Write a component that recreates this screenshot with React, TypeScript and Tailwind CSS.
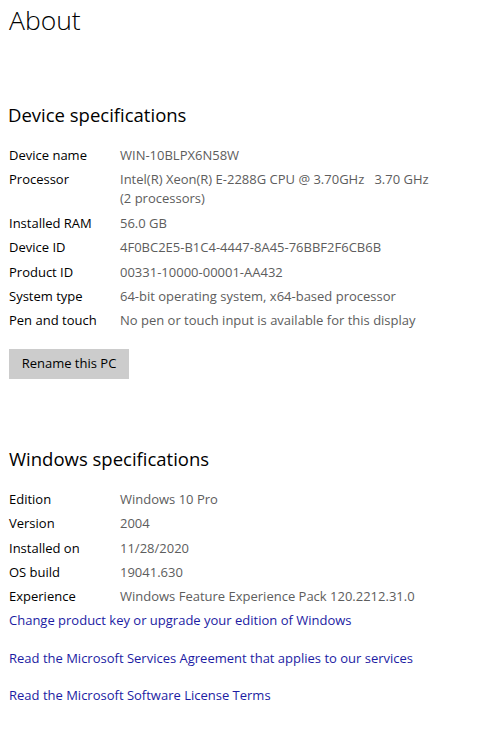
const font = { fontFamily: '"Open Sans", "Noto Sans", sans-serif' };

type Spec = { label: string; value: string[] };

const device: Spec[] = [
  { label: "Device name", value: ["WIN-10BLPX6N58W"] },
  { label: "Processor", value: ["Intel(R) Xeon(R) E-2288G CPU @ 3.70GHz   3.70 GHz", "(2 processors)"] },
  { label: "Installed RAM", value: ["56.0 GB"] },
  { label: "Device ID", value: ["4F0BC2E5-B1C4-4447-8A45-76BBF2F6CB6B"] },
  { label: "Product ID", value: ["00331-10000-00001-AA432"] },
  { label: "System type", value: ["64-bit operating system, x64-based processor"] },
  { label: "Pen and touch", value: ["No pen or touch input is available for this display"] },
];

const windows: Spec[] = [
  { label: "Edition", value: ["Windows 10 Pro"] },
  { label: "Version", value: ["2004"] },
  { label: "Installed on", value: ["11/28/2020"] },
  { label: "OS build", value: ["19041.630"] },
  { label: "Experience", value: ["Windows Feature Experience Pack 120.2212.31.0"] },
];

function SpecList({ items }: { items: Spec[] }) {
  return (
    <div className="flex flex-col gap-[5.4px]">
      {items.map((item) => (
        <div key={item.label} className="flex text-[13px] leading-[19px]">
          <div className="w-[111px] shrink-0 text-black">{item.label}</div>
          <div className="text-[#5d5d5d] whitespace-pre">
            {item.value.map((line) => (
              <div key={line}>{line}</div>
            ))}
          </div>
        </div>
      ))}
    </div>
  );
}

export default function App() {
  return (
    <div className="min-h-screen bg-white pl-[9px]" style={font}>
      <h1 className="text-[26.5px] leading-[40px] font-light text-black">About</h1>

      <h2 className="mt-[61px] -ml-px text-[18.5px] leading-[28px] text-black">Device specifications</h2>
      <div className="mt-[17px]">
        <SpecList items={device} />
      </div>
      <button className="mt-[18.5px] h-[30px] w-[120px] bg-[#cccccc] text-[13px] text-black">
        Rename this PC
      </button>

      <h2 className="mt-[66px] text-[18.5px] leading-[28px] text-black">Windows specifications</h2>
      <div className="mt-[17px]">
        <SpecList items={windows} />
      </div>

      <div className="mt-[5px] flex flex-col gap-[18.5px] text-[13px] leading-[19px] text-[#1c1ca3]">
        <a href="#">Change product key or upgrade your edition of Windows</a>
        <a href="#">Read the Microsoft Services Agreement that applies to our services</a>
        <a href="#">Read the Microsoft Software License Terms</a>
      </div>
    </div>
  );
}
